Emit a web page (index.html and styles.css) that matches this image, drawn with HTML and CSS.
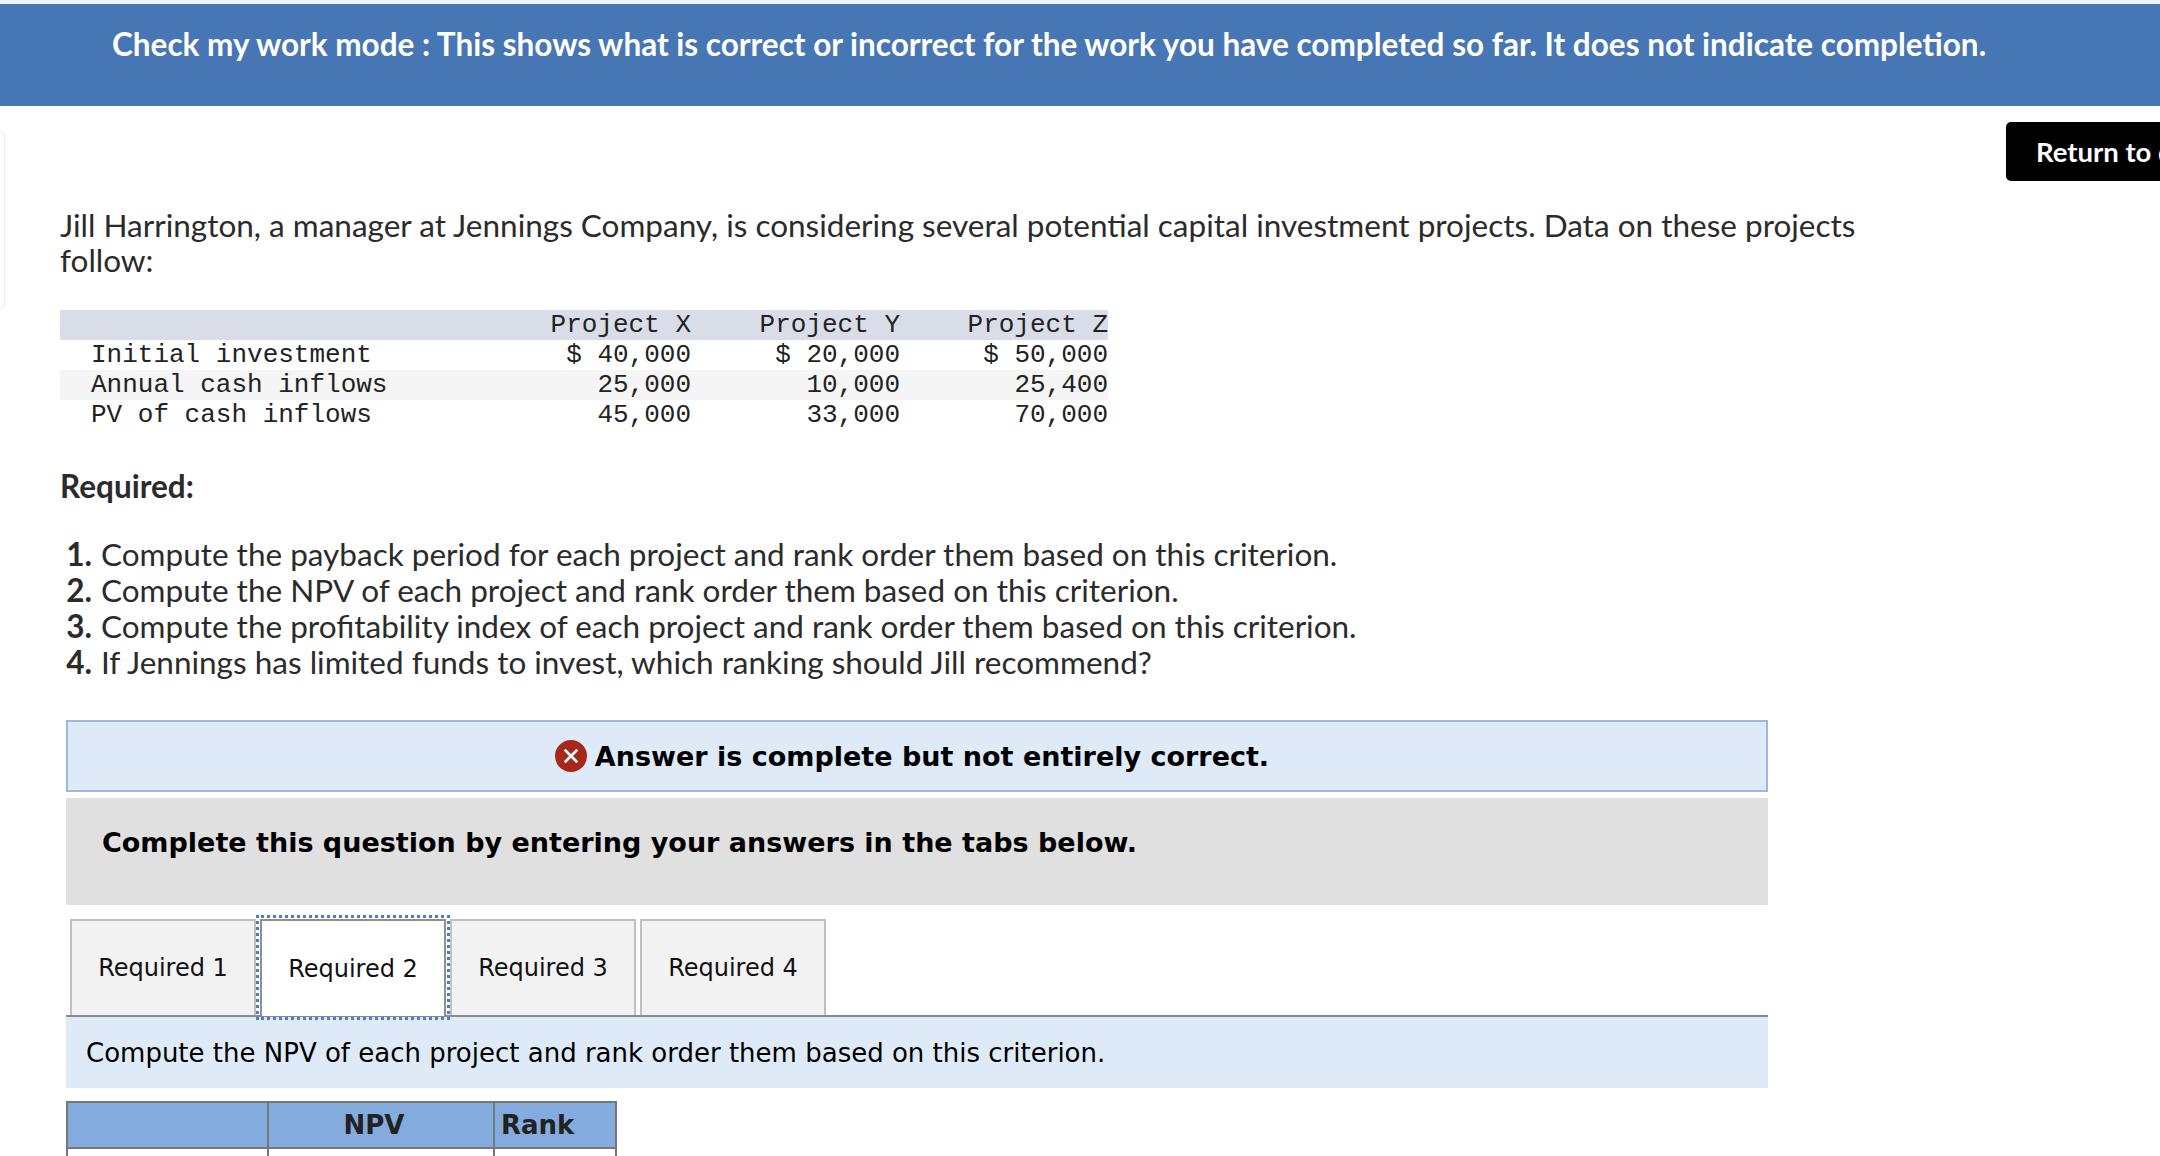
FILE: index.html
```html
<!DOCTYPE html>
<html lang="en">
<head>
<meta charset="utf-8">
<title>Check my work</title>
<link rel="stylesheet" href="styles.css">
</head>
<body>
<div class="banner"><p>Check my work mode : This shows what is correct or incorrect for the work you have completed so far. It does not indicate completion.</p></div>
<div class="side-tab"></div>
<button class="return-btn">Return to question</button>
<main class="content">
  <p class="intro">Jill Harrington, a manager at Jennings Company, is considering several potential capital investment projects. Data on these projects follow:</p>
  <table class="data">
    <tr class="head"><td></td><th>Project X</th><th>Project Y</th><th>Project Z</th></tr>
    <tr><td class="lbl">Initial investment</td><td>$ 40,000</td><td>$ 20,000</td><td>$ 50,000</td></tr>
    <tr class="alt"><td class="lbl">Annual cash inflows</td><td>25,000</td><td>10,000</td><td>25,400</td></tr>
    <tr><td class="lbl">PV of cash inflows</td><td>45,000</td><td>33,000</td><td>70,000</td></tr>
  </table>
  <h2 class="req">Required:</h2>
  <ol class="steps">
    <li><b>1.</b><span>Compute the payback period for each project and rank order them based on this criterion.</span></li>
    <li><b>2.</b><span>Compute the NPV of each project and rank order them based on this criterion.</span></li>
    <li><b>3.</b><span>Compute the profitability index of each project and rank order them based on this criterion.</span></li>
    <li><b>4.</b><span>If Jennings has limited funds to invest, which ranking should Jill recommend?</span></li>
  </ol>
  <section class="work">
    <div class="answer">
      <svg class="x-icon" width="32" height="32" viewBox="0 0 32 32"><circle cx="16" cy="16" r="16" fill="#a5281b"/><path d="M10.5 10.5l11 11M21.5 10.5l-11 11" stroke="#fff" stroke-width="2.6" stroke-linecap="round"/></svg>
      <strong>Answer is complete but not entirely correct.</strong>
    </div>
    <div class="prompt"><strong>Complete this question by entering your answers in the tabs below.</strong></div>
    <div class="tabs">
      <div class="tab">Required 1</div>
      <div class="tab active">Required 2</div>
      <div class="tab">Required 3</div>
      <div class="tab">Required 4</div>
    </div>
    <div class="instruction">Compute the NPV of each project and rank order them based on this criterion.</div>
    <table class="answers">
      <tr class="ahead"><th class="c1"></th><th class="c2">NPV</th><th class="c3">Rank</th></tr>
      <tr><td>Project X</td><td></td><td></td></tr>
    </table>
  </section>
</main>
</body>
</html>
```
FILE: styles.css
```css
html, body { margin: 0; height: 1156px; overflow: hidden; background: #fff; }
body { position: relative; font-family: "Lato", "Open Sans", sans-serif; color: #2b2b2b; border-top: 4px solid #f0f1f3; box-sizing: border-box; }
.banner { height: 102px; background: #4776b4; box-sizing: border-box; padding: 20px 112px 0; color: #fff; font-weight: 700; font-size: 31.5px; line-height: 40px; white-space: nowrap; }
.banner p { margin: 0; }
.side-tab { position: absolute; left: -8px; top: 126px; width: 11px; height: 178px; border: 1px solid #ececec; border-radius: 8px; }
.return-btn { position: absolute; left: 2006px; top: 118px; width: 300px; height: 59px; background: #000; color: #fff; border: 0; border-radius: 5px; padding: 0 0 0 30px; text-align: left; font: 700 27.5px "Lato", sans-serif; white-space: nowrap; }
.content { padding: 102px 0 0 60px; }
.intro { margin: 0; width: 1860px; font-size: 31.5px; line-height: 35px; }
.data { margin-top: 32px; width: 1048px; border-collapse: collapse; table-layout: fixed; font: 26px/30px "Liberation Mono", monospace; color: #222; }
.data td, .data th { padding: 0; height: 30px; font-weight: 400; text-align: right; white-space: pre; }
.data tr > :nth-child(1) { width: 485px; }
.data tr > :nth-child(2) { width: 146px; padding-right: 13px; }
.data tr > :nth-child(3) { width: 196px; padding-right: 0; }
.data .head { background: #d8dde7; }
.data .alt { background: #f5f5f6; }
.data .lbl { text-align: left; padding-left: 31px; box-sizing: border-box; }
.req { margin: 38px 0 0; font-size: 31.5px; line-height: 36px; font-weight: 700; }
.steps { list-style: none; margin: 32px 0 0; padding: 0; font-size: 31.5px; line-height: 36px; }
.steps li { display: flex; gap: 9px; }
.steps b { width: 32px; text-align: right; }
.work { margin: 40px 0 0 6px; width: 1702px; font-family: "DejaVu Sans", Verdana, sans-serif; color: #000; }
.answer { height: 72px; box-sizing: border-box; background: #deeaf8; border: 2px solid #9ab9dc; display: flex; align-items: center; justify-content: center; gap: 8px; font-size: 27px; padding-right: 10px; }
.prompt { margin-top: 6px; height: 107px; box-sizing: border-box; background: #e0e0e0; padding: 27px 36px 0; font-size: 27px; line-height: 36px; }
.tabs { display: flex; gap: 4px; margin-top: 14px; padding-left: 4px; height: 96px; border-bottom: 2px solid #8a8a8a; box-sizing: content-box; }
.tab { width: 186px; box-sizing: border-box; height: 96px; background: #f2f2f2; border: 2px solid #c0c0c0; border-bottom: 0; display: flex; align-items: center; justify-content: center; font-size: 24px; color: #111; }
.tab.active { position: relative; background: #fff; border-color: #8f8f8f; height: 97px; outline: 3px dotted #4a7fc1; outline-offset: 1px; }
.instruction { height: 71px; background: #deeaf8; padding-left: 20px; font-size: 26px; line-height: 72px; }
.answers { margin-top: 13px; border-collapse: collapse; table-layout: fixed; width: 549px; font-size: 26px; }
.answers th, .answers td { border: 2px solid #777; padding: 0 6px; height: 46px; box-sizing: border-box; }
.ahead th { background: #83abdd; color: #222; text-align: center; }
.answers .c1 { width: 201px; }
.answers .c2 { width: 226px; padding-right: 20px; }
.answers .c3 { width: 122px; text-align: left; }
```
